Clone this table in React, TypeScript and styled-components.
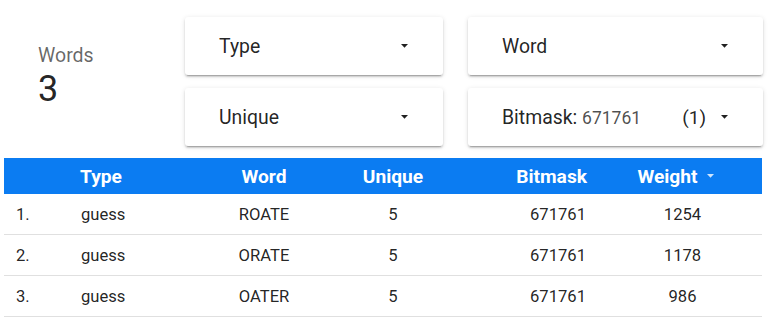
import React from "react";
import styled, { createGlobalStyle } from "styled-components";

const Global = createGlobalStyle`
  html, body { margin: 0; padding: 0; background: #fff; }
  body { font-family: Roboto, "Liberation Sans", sans-serif; color: rgba(0,0,0,0.87); }
`;

const Page = styled.div`
  width: 775px;
`;

const Top = styled.div`
  display: flex;
  padding-top: 17px;
`;

const Stat = styled.div`
  width: 185px;
  box-sizing: border-box;
  padding: 29px 0 0 38px;
  display: flex;
  flex-direction: column;
`;

const StatLabel = styled.div`
  font-size: 19.5px;
  line-height: 20px;
  color: rgba(0, 0, 0, 0.6);
`;

const StatValue = styled.div`
  margin-top: 5px;
  font-size: 36px;
  line-height: 36px;
  color: rgba(0, 0, 0, 0.87);
`;

const Filters = styled.div`
  display: grid;
  grid-template-columns: 258px 295px;
  grid-auto-rows: 58px;
  column-gap: 25px;
  row-gap: 13px;
`;

const Select = styled.div`
  display: flex;
  align-items: center;
  padding: 0 35px 0 34px;
  background: #fff;
  border-radius: 3px;
  box-shadow: 0px 3px 1px -2px rgba(0,0,0,0.2), 0px 2px 2px 0px rgba(0,0,0,0.14), 0px 1px 5px 0px rgba(0,0,0,0.12);
  font-size: 19.4px;
  color: rgba(0, 0, 0, 0.87);
`;

const SelectLabel = styled.span`
  flex: 1;
  white-space: nowrap;
`;

const SelectValue = styled.span`
  font-size: 17.5px;
  color: rgba(0, 0, 0, 0.7);
`;

const Count = styled.span`
  font-size: 19px;
  margin-right: 15px;
`;

const Caret = ({ color = "rgba(0,0,0,0.87)" }: { color?: string }) => (
  <svg width="7" height="4" viewBox="0 0 7 4">
    <path d="M0 0 L7 0 L3.5 3.8 Z" fill={color} />
  </svg>
);

const Table = styled.div`
  margin: 12px 13px 0 4px;
  display: flex;
  flex-direction: column;
`;

const COLS = "60px 136px 128px 130px 145px 159px";

const HeadRow = styled.div`
  display: grid;
  grid-template-columns: ${COLS};
  height: 36px;
  align-items: center;
  background: #0b7cf2;
  color: #fff;
  font-weight: 700;
  font-size: 19.2px;
`;

const Row = styled.div`
  display: grid;
  grid-template-columns: ${COLS};
  height: 40px;
  align-items: center;
  border-bottom: 1px solid #e0e0e0;
  font-size: 16.6px;
  color: rgba(0, 0, 0, 0.87);
`;

type Align = "left" | "center" | "right";

const Cell = styled.div<{ $align: Align; $pl?: number; $pr?: number }>`
  display: flex;
  align-items: center;
  gap: 9px;
  justify-content: ${(p) => (p.$align === "left" ? "flex-start" : p.$align === "right" ? "flex-end" : "center")};
  padding-left: ${(p) => p.$pl ?? 0}px;
  padding-right: ${(p) => p.$pr ?? 0}px;
  white-space: nowrap;
`;

const rows = [
  { n: "1.", type: "guess", word: "ROATE", unique: 5, bitmask: 671761, weight: 1254 },
  { n: "2.", type: "guess", word: "ORATE", unique: 5, bitmask: 671761, weight: 1178 },
  { n: "3.", type: "guess", word: "OATER", unique: 5, bitmask: 671761, weight: 986 },
];

export default function App() {
  return (
    <Page>
      <Global />
      <Top>
        <Stat>
          <StatLabel>Words</StatLabel>
          <StatValue>3</StatValue>
        </Stat>
        <Filters>
          <Select>
            <SelectLabel>Type</SelectLabel>
            <Caret />
          </Select>
          <Select>
            <SelectLabel>Word</SelectLabel>
            <Caret />
          </Select>
          <Select>
            <SelectLabel>Unique</SelectLabel>
            <Caret />
          </Select>
          <Select>
            <SelectLabel>
              Bitmask: <SelectValue>671761</SelectValue>
            </SelectLabel>
            <Count>(1)</Count>
            <Caret />
          </Select>
        </Filters>
      </Top>
      <Table>
        <HeadRow>
          <Cell $align="left" />
          <Cell $align="left" $pl={16}>Type</Cell>
          <Cell $align="center">Word</Cell>
          <Cell $align="center">Unique</Cell>
          <Cell $align="right" $pr={16}>Bitmask</Cell>
          <Cell $align="center" $pr={14}>
            Weight <Caret color="rgba(255,255,255,0.8)" />
          </Cell>
        </HeadRow>
        {rows.map((r) => (
          <Row key={r.n}>
            <Cell $align="left" $pl={12}>{r.n}</Cell>
            <Cell $align="left" $pl={17}>{r.type}</Cell>
            <Cell $align="center">{r.word}</Cell>
            <Cell $align="center">{r.unique}</Cell>
            <Cell $align="right" $pr={17}>{r.bitmask}</Cell>
            <Cell $align="center">{r.weight}</Cell>
          </Row>
        ))}
      </Table>
    </Page>
  );
}
